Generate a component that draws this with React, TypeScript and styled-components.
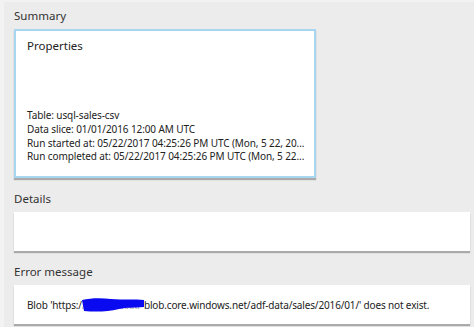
import React from 'react';
import styled, { createGlobalStyle } from 'styled-components';

const GlobalStyle = createGlobalStyle`
    html, body {
        margin: 0;
        padding: 0;
        background: #ededed;
    }
    body {
        font-family: "Noto Sans", "Open Sans", sans-serif;
        color: #333;
    }
`;

const Page = styled.div`
    width: 474px;
    height: 327px;
    box-sizing: border-box;
    padding: 3px 4px 0 10px;
    display: flex;
    flex-direction: column;
    gap: 10px;
    background: #ececec;
    border-left: 4px solid #f3f3f3;
    border-top: 2px solid #f2f2f2;
    overflow: hidden;
`;

const Section = styled.div`
    display: flex;
    flex-direction: column;
`;

const SectionLabel = styled.div`
    font-size: 11.5px;
    line-height: 22px;
    height: 22px;
    margin-bottom: 2px;
    color: #333;
`;

const Card = styled.div<{ $width: number; $height: number; $selected?: boolean }>`
    box-sizing: border-box;
    width: ${p => p.$width}px;
    height: ${p => p.$height}px;
    background: #fff;
    border: ${p => (p.$selected ? '2px solid #a8d5ef' : 'none')};
    box-shadow: 0 2px 1px rgba(0, 0, 0, 0.28);
`;

const PropertiesCard = styled(Card)`
    display: flex;
    flex-direction: column;
    justify-content: space-between;
    padding: 6px 8px 12px 11px;
`;

const CardTitle = styled.div`
    font-size: 11.5px;
    line-height: 18px;
    color: #222;
`;

const PropList = styled.div`
    display: flex;
    flex-direction: column;
`;

const PropLine = styled.div`
    font-size: 10px;
    letter-spacing: -0.1px;
    line-height: 13.7px;
    white-space: nowrap;
    color: #222;
`;

const ErrorCard = styled(Card)`
    display: flex;
    align-items: center;
    padding-left: 13px;
`;

const ErrorText = styled.div`
    font-size: 10px;
    letter-spacing: -0.15px;
    white-space: nowrap;
    color: #222;
`;

const Redacted = styled.span`
    position: relative;
    display: inline-block;
    width: 62px;
    vertical-align: bottom;
`;

const HiddenName = styled.span`
    display: block;
    overflow: hidden;
    color: #999;
`;

const Scribble = styled.svg`
    position: absolute;
    left: -1px;
    top: 0px;
`;

const props = [
    'Table: usql-sales-csv',
    'Data slice: 01/01/2016 12:00 AM UTC',
    'Run started at: 05/22/2017 04:25:26 PM UTC (Mon, 5 22, 20...',
    'Run completed at: 05/22/2017 04:25:26 PM UTC (Mon, 5 22...',
];

const App = () => {
    return (
        <>
            <GlobalStyle />
            <Page>
                <Section>
                    <SectionLabel>Summary</SectionLabel>
                    <PropertiesCard $width={302} $height={149} $selected>
                        <CardTitle>Properties</CardTitle>
                        <PropList>
                            {props.map(line => (
                                <PropLine key={line}>{line}</PropLine>
                            ))}
                        </PropList>
                    </PropertiesCard>
                </Section>
                <Section>
                    <SectionLabel>Details</SectionLabel>
                    <Card $width={456} $height={39} />
                </Section>
                <Section>
                    <SectionLabel>Error message</SectionLabel>
                    <ErrorCard $width={456} $height={39}>
                        <ErrorText>
                            Blob 'https:/
                            <Redacted>
                                <HiddenName>/xxxxxxxxxx.</HiddenName>
                                <Scribble width="64" height="15" viewBox="0 0 64 15">
                                    <path
                                        d="M1 2 C10 0, 20 0, 30 1 C42 2, 54 1, 63 2 L63 9 C54 10, 46 9, 38 11 C26 14, 14 14, 3 13 Z"
                                        fill="#0a0af0"
                                    />
                                </Scribble>
                            </Redacted>
                            blob.core.windows.net/adf-data/sales/2016/01/' does not exist.
                        </ErrorText>
                    </ErrorCard>
                </Section>
            </Page>
        </>
    );
};

export default App;
